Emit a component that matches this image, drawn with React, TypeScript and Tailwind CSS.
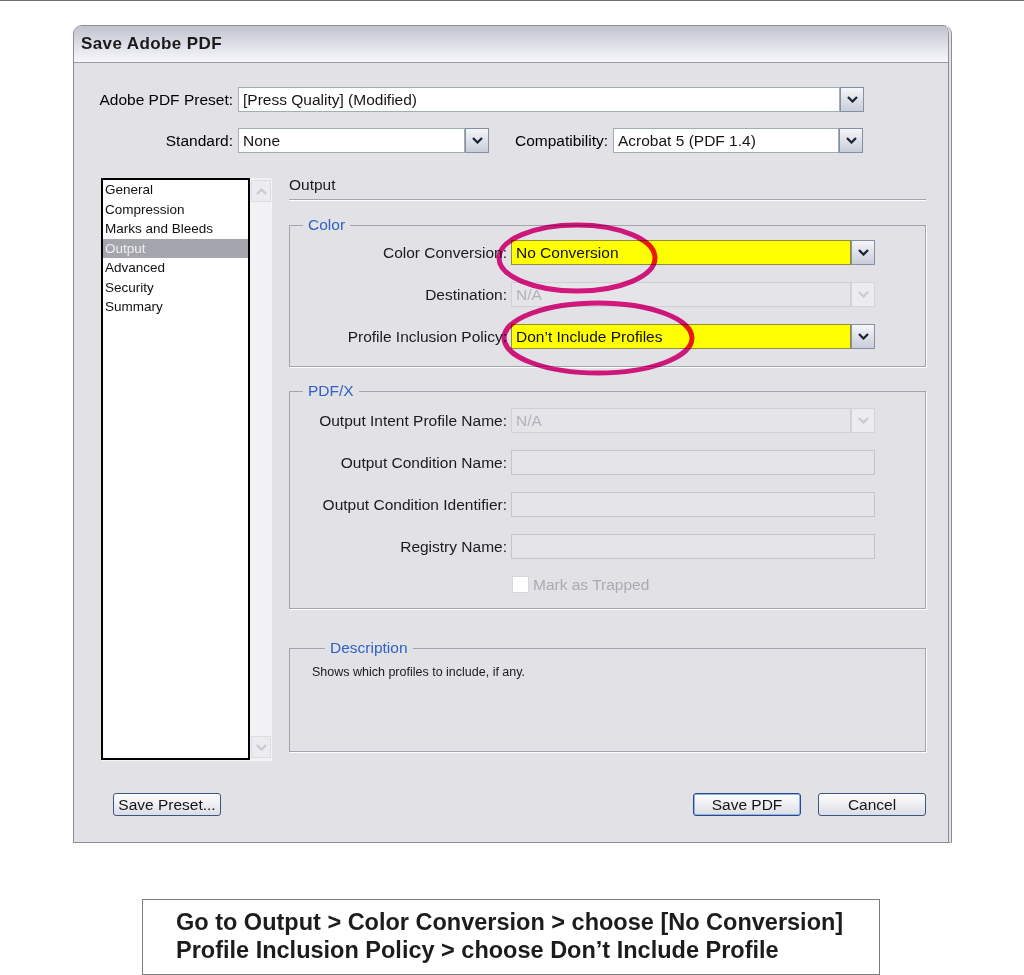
import React from 'react';

const UI = { fontFamily: '"Liberation Sans", Arial, sans-serif' };

function Chevron({ up = false, pale = false }: { up?: boolean; pale?: boolean }) {
  return (
    <svg width="11" height="7" viewBox="0 0 11 7">
      <polyline
        points={up ? '1,6 5.5,1.5 10,6' : '1,1 5.5,5.5 10,1'}
        fill="none"
        stroke={pale ? '#c9cbd2' : '#1d2535'}
        strokeWidth="2.3"
      />
    </svg>
  );
}

function DropButton({ disabled = false }: { disabled?: boolean }) {
  return (
    <div
      className={`w-[24px] h-full flex items-center justify-center border ${
        disabled
          ? 'border-[#d4d5da] bg-[#ececef]'
          : 'border-[#8590a6] bg-gradient-to-b from-[#f5f6fa] to-[#c9cdd9]'
      }`}
    >
      <Chevron pale={disabled} />
    </div>
  );
}

function Select({
  value,
  className,
  yellow = false,
  disabled = false,
}: {
  value?: string;
  className: string;
  yellow?: boolean;
  disabled?: boolean;
}) {
  const field = yellow
    ? 'bg-[#ffff00] border-[#8e8e3e] text-[#111]'
    : disabled
    ? 'bg-[#e5e5e9] border-[#cfd0d5] text-[#b3b3b9]'
    : 'bg-white border-[#a0aeae] text-[#161616]';
  return (
    <div className={`flex h-[25px] ${className}`}>
      <div className={`flex-1 flex items-center pl-[4px] border whitespace-nowrap ${field}`}>{value}</div>
      <DropButton disabled={disabled} />
    </div>
  );
}

function TextField({ value }: { value?: string }) {
  return (
    <div className="w-[364px] h-[25px] flex items-center pl-[4px] border border-[#c4c5cb] bg-[#e5e5e9] text-[#b3b3b9]">
      {value}
    </div>
  );
}

function FieldRow({ label, children }: { label: string; children: React.ReactNode }) {
  return (
    <div className="flex items-center h-[25px]">
      <div className="w-[221px] pr-[4px] text-right whitespace-nowrap text-[#1b1b1b]">{label}</div>
      {children}
    </div>
  );
}

function Group({ title, className, children }: { title: string; className: string; children: React.ReactNode }) {
  return (
    <fieldset className={`border border-[#a3a4ac] shadow-[1px_1px_0_#ffffff] ${className}`}>
      <legend className="ml-[13px] px-[5px] text-[15.5px] leading-[18px] text-[#2f62c4]">{title}</legend>
      {children}
    </fieldset>
  );
}

function Button({ label, def = false }: { label: string; def?: boolean }) {
  return (
    <div
      className={`w-[108px] h-[23px] flex items-center justify-center rounded-[3px] border bg-gradient-to-b from-[#ffffff] to-[#dcdde5] text-[#161616] ${
        def ? 'border-[#27498a] shadow-[inset_0_0_0_1px_#8fb2e8]' : 'border-[#3b5683]'
      }`}
    >
      {label}
    </div>
  );
}

const items = ['General', 'Compression', 'Marks and Bleeds', 'Output', 'Advanced', 'Security', 'Summary'];

export default function App() {
  return (
    <div className="relative w-[1024px] h-[975px] bg-white border-t border-[#707070] overflow-hidden" style={UI}>
      {/* DIALOG */}
      <div className="ml-[73px] mt-[24px] w-[879px] h-[818px] flex flex-col rounded-t-[9px] border-double border-l border-t border-[#8e8e96] border-r-[4px] border-r-[#8e8e96] border-b border-b-[#8e8e96] bg-[#e1e1e6] overflow-hidden text-[15.5px]">
        {/* title bar */}
        <div className="h-[37px] shrink-0 flex items-center pl-[7px] bg-gradient-to-b from-[#c3c3d0] via-[#dedee8] to-[#f7f7fb] border-b border-[#9a9aa6]">
          <span className="font-bold text-[17px] tracking-[0.4px] text-[#1a1a1a]">Save Adobe PDF</span>
        </div>

        <div className="flex-1 flex flex-col pl-[27px] pr-[22px] pt-[24px]">
          {/* preset */}
          <div className="flex items-center h-[25px] -ml-[27px]">
            <div className="w-[164px] pr-[5px] text-right whitespace-nowrap">Adobe PDF Preset:</div>
            <Select value="[Press Quality] (Modified)" className="w-[626px]" />
          </div>
          {/* standard / compatibility */}
          <div className="flex items-center h-[25px] mt-[16px] -ml-[27px]">
            <div className="w-[164px] pr-[5px] text-right whitespace-nowrap">Standard:</div>
            <Select value="None" className="w-[251px]" />
            <div className="ml-[20px] w-[104px] pr-[5px] text-right whitespace-nowrap">Compatibility:</div>
            <Select value="Acrobat 5 (PDF 1.4)" className="w-[250px]" />
          </div>

          {/* main area */}
          <div className="flex mt-[25px] h-[582px]">
            {/* list */}
            <div className="flex w-[171px] h-full shadow-[1px_1px_0_#f4f4f6]">
              <div className="w-[149px] h-full border-2 border-black bg-white text-[13.5px] leading-[19.5px]">
                {items.map((it) => (
                  <div
                    key={it}
                    className={`pl-[2px] ${it === 'Output' ? 'bg-[#a5a5ad] text-[#eeeef2]' : 'text-[#111]'}`}
                  >
                    {it}
                  </div>
                ))}
              </div>
              <div className="flex-1 h-full flex flex-col justify-between bg-[#f2f2f5] py-[2px] pl-[1px]">
                <div className="h-[22px] flex items-center justify-center border border-[#dcdde2] bg-[#ececf0]">
                  <Chevron up pale />
                </div>
                <div className="h-[22px] flex items-center justify-center border border-[#dcdde2] bg-[#ececf0]">
                  <Chevron pale />
                </div>
              </div>
            </div>

            {/* right panel */}
            <div className="ml-[18px] w-[639px] flex flex-col">
              <div className="leading-[18px] -mt-[2px] text-[#1b1b1b]">Output</div>
              <div className="mt-[5px] h-[2px] border-t border-[#a3a4ac] border-b border-b-white" />

              <Group title="Color" className="mt-[15px] w-[637px] pt-[6px] pb-[17px]">
                <div className="flex flex-col gap-[17px]">
                  <FieldRow label="Color Conversion:">
                    <Select value="No Conversion" className="w-[364px]" yellow />
                  </FieldRow>
                  <FieldRow label="Destination:">
                    <Select value="N/A" className="w-[364px]" disabled />
                  </FieldRow>
                  <FieldRow label="Profile Inclusion Policy:">
                    <Select value="Don’t Include Profiles" className="w-[364px]" yellow />
                  </FieldRow>
                </div>
              </Group>

              <Group title="PDF/X" className="mt-[15px] w-[637px] pt-[8px] pb-[12px]">
                <div className="flex flex-col gap-[17px]">
                  <FieldRow label="Output Intent Profile Name:">
                    <Select value="N/A" className="w-[364px]" disabled />
                  </FieldRow>
                  <FieldRow label="Output Condition Name:">
                    <TextField />
                  </FieldRow>
                  <FieldRow label="Output Condition Identifier:">
                    <TextField />
                  </FieldRow>
                  <FieldRow label="Registry Name:">
                    <TextField />
                  </FieldRow>
                </div>
                <div className="flex items-center mt-[14px] pl-[222px]">
                  <div className="w-[17px] h-[17px] bg-white border border-[#d6d7dc]" />
                  <span className="ml-[4px] text-[#aaaab0]">Mark as Trapped</span>
                </div>
              </Group>

              <Group title="Description" className="mt-[30px] w-[637px] h-[113px] pl-[22px] pt-[6px]">
                <div className="text-[12.5px] text-[#1b1b1b]">Shows which profiles to include, if any.</div>
              </Group>
            </div>
          </div>

          {/* buttons */}
          <div className="flex items-center mt-[33px] pl-[12px]">
            <Button label="Save Preset..." />
            <div className="flex-1" />
            <Button label="Save PDF" def />
            <div className="ml-[17px]">
              <Button label="Cancel" />
            </div>
          </div>
        </div>
      </div>

      {/* pen marks */}
      <svg className="absolute left-[495px] top-[220px] mix-blend-multiply pointer-events-none" width="164" height="74">
        <ellipse cx="82" cy="37" rx="78" ry="33" fill="none" stroke="#ea1a88" strokeWidth="5" />
      </svg>
      <svg className="absolute left-[500px] top-[298px] mix-blend-multiply pointer-events-none" width="196" height="78">
        <ellipse cx="98" cy="39" rx="94" ry="35" fill="none" stroke="#ea1a88" strokeWidth="5" />
      </svg>

      {/* caption */}
      <div className="ml-[142px] mt-[56px] w-[738px] h-[76px] border border-[#7c7c7c] pl-[33px] pt-[8px]">
        <div className="font-bold text-[23.5px] leading-[28px] text-[#1c1c1c] whitespace-nowrap">
          Go to Output &gt; Color Conversion &gt; choose [No Conversion]
        </div>
        <div className="font-bold text-[23.5px] leading-[28px] text-[#1c1c1c] whitespace-nowrap">
          Profile Inclusion Policy &gt; choose Don’t Include Profile
        </div>
      </div>
    </div>
  );
}
